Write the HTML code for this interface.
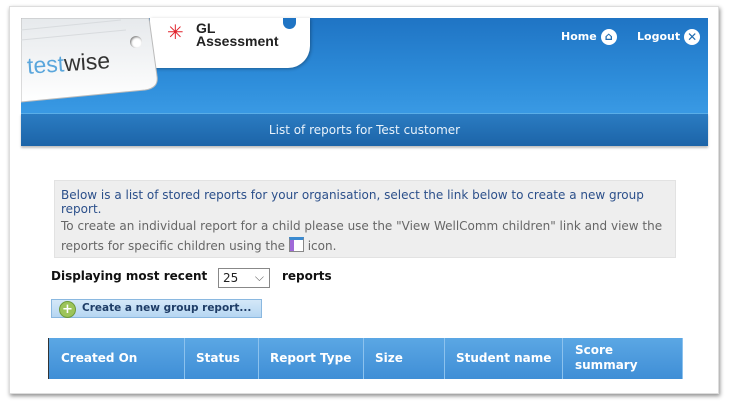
<!DOCTYPE html>
<html><head><meta charset="utf-8"><style>
*{margin:0;padding:0;box-sizing:border-box}
body{width:729px;height:405px;background:#fff;position:relative;overflow:hidden;font-family:"DejaVu Sans","Liberation Sans",sans-serif}
.frame{position:absolute;left:9px;top:6px;width:710px;height:388px;background:#fff;box-shadow:1px 2px 4px rgba(0,0,0,.45);border:1px solid #ddd}
.hdr{position:absolute;left:21px;top:18px;width:687px;height:96px;background:linear-gradient(#1f74c4,#2f8fdc 70%,#3a9ae4)}
.bar{position:absolute;left:21px;top:113px;width:687px;height:33px;background:linear-gradient(#2b7cc2,#1c64a8);border-top:1px solid #5aaee8;color:#e8f2fb;font-size:12px;text-align:center;line-height:32px;box-shadow:0 2px 2px rgba(0,0,0,.25)}
.tag1{position:absolute;left:150px;top:18px;width:160px;height:50px;background:#fff;border-radius:0 0 22px 0;box-shadow:1px 1px 3px rgba(0,0,0,.3)}
.nav{position:absolute;top:29px;color:#fff;font-weight:bold;font-size:11px}
.ic{display:inline-block;width:16px;height:16px;border-radius:50%;background:#fff;color:#1f6bb0;font-size:11px;text-align:center;line-height:16px;vertical-align:middle;margin-left:4px}
.info{position:absolute;left:54px;top:180px;width:622px;height:78px;background:#eeeeee;border:1px solid #e2e2e2;padding:7px 6px;font-size:12px;line-height:14px}
.th{position:absolute;top:338px;height:41px;background:linear-gradient(#5ba7e4,#3f8ed6);color:#fff;font-weight:bold;font-size:12px;line-height:41px;border-right:1px solid #8cc2ee}
</style></head><body>
<div class="frame"></div>
<div class="hdr"></div>
<div class="tag1"></div>
<svg style="position:absolute;left:21px;top:18px" width="140" height="86" viewBox="0 0 140 86">
<defs><linearGradient id="g" x1="0" y1="0" x2="0" y2="1"><stop offset="0" stop-color="#e6e9ec"/><stop offset="1" stop-color="#fff"/></linearGradient></defs>
<path d="M0 0 H128 L136 58 Q138 70 124 72 L0 84 Z" fill="url(#g)" stroke="#bbb" stroke-width="1"/>
<path d="M0 12 L100 2 M0 22 L105 12" stroke="#d8dbde" stroke-width="1"/>
</svg>
<div style="position:absolute;left:130px;top:36px;width:12px;height:12px;border-radius:50%;background:#fff;box-shadow:inset 1px 1px 2px #777"></div>
<div style="position:absolute;left:283px;top:18px;width:13px;height:11px;border-radius:0 0 7px 7px;background:#1f74c4"></div>
<div style="position:absolute;left:167px;top:22px;color:#e0222b;font-size:20px;line-height:20px">✳</div>
<div style="position:absolute;left:196px;top:22px;font-family:'Liberation Sans',sans-serif;font-weight:bold;font-size:14px;line-height:13px;color:#222">GL<br>Assessment</div>
<div style="position:absolute;left:27px;top:50px;font-family:'Liberation Sans',sans-serif;font-size:23px;color:#333;transform:rotate(-4deg)"><span style="color:#5aa6dc">test</span>wise</div>
<div class="nav" style="left:561px">Home<span class="ic">⌂</span></div>
<div class="nav" style="left:637px">Logout<span class="ic" style="font-size:12px">✕</span></div>
<div class="bar">List of reports for Test customer</div>
<div class="info"><span style="color:#2b4f8a">Below is a list of stored reports for your organisation, select the link below to create a new group report.</span><br><span style="color:#666;line-height:20px">To create an individual report for a child please use the "View WellComm children" link and view the reports for specific children using the <span style="display:inline-block;width:15px;height:15px;border:1px solid #888;background:linear-gradient(90deg,#a06ad8 30%,#fff 30%);border-top:3px solid #3a8ad0;vertical-align:-2px"></span> icon.</span></div>
<div style="position:absolute;left:51px;top:269px;font-weight:bold;font-size:12px;color:#111">Displaying most recent</div>
<div style="position:absolute;left:218px;top:268px;width:52px;height:20px;border:1px solid #888;font-size:12px;padding:2px 4px;color:#222">25<span style="position:absolute;right:5px;top:1px;color:#666">⌵</span></div>
<div style="position:absolute;left:282px;top:269px;font-weight:bold;font-size:12px;color:#111">reports</div>
<div style="position:absolute;left:51px;top:299px;width:211px;height:19px;background:linear-gradient(#d4e8f8,#b6d6f2);border:1px solid #8ab8e0;font-size:10.5px;font-weight:bold;color:#1e3c66;line-height:17px;padding-left:30px">Create a new group report...</div>
<div style="position:absolute;left:59px;top:301px;width:17px;height:17px;border-radius:50%;background:#9cc45a;border:1px solid #6e9b3a;color:#fff;font-size:13px;text-align:center;line-height:15px;font-weight:bold">+</div>
<div class="th" style="left:48px;width:137px;padding-left:12px;border-left:1px solid #333">Created On</div>
<div class="th" style="left:185px;width:74px;padding-left:11px">Status</div>
<div class="th" style="left:259px;width:105px;padding-left:11px">Report Type</div>
<div class="th" style="left:364px;width:81px;padding-left:11px">Size</div>
<div class="th" style="left:445px;width:118px;padding-left:11px">Student name</div>
<div class="th" style="left:563px;width:120px;padding-left:12px;line-height:15px;padding-top:5px">Score<br>summary</div>
</body></html>
